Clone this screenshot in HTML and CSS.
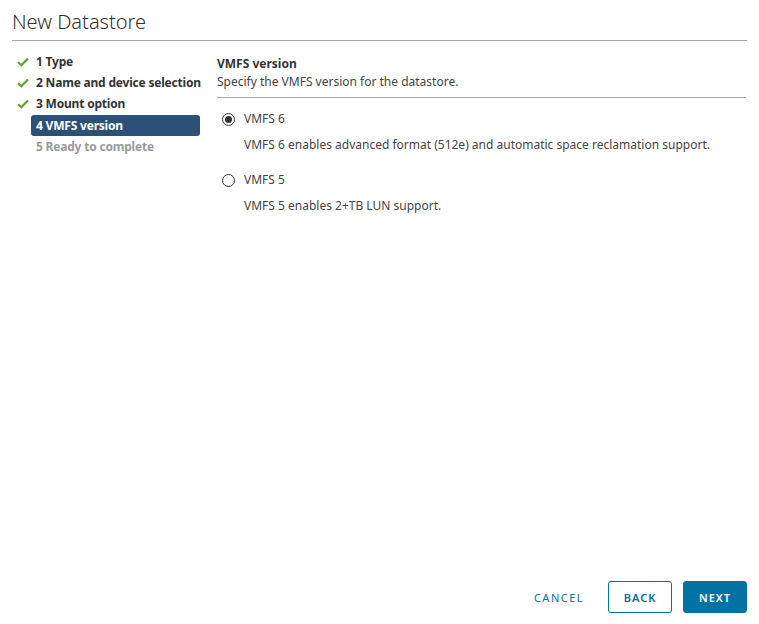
FILE: index.html
```html
<!DOCTYPE html>
<html lang="en">
<head>
    <meta charset="UTF-8">
    <title>New Datastore</title>
    <link rel="stylesheet" href="styles.css">
</head>
<body>
    <div class="wizard">
        <h1 class="wizard-title">New Datastore</h1>

        <div class="wizard-body">
            <ul class="steps">
                <li class="step done"><span class="check"><svg width="12" height="10" viewBox="0 0 12 10"><path d="M1 5.2 L4.3 8.3 L11 1.5" fill="none" stroke="#5fa02b" stroke-width="2.2"/></svg></span>1 Type</li>
                <li class="step done"><span class="check"><svg width="12" height="10" viewBox="0 0 12 10"><path d="M1 5.2 L4.3 8.3 L11 1.5" fill="none" stroke="#5fa02b" stroke-width="2.2"/></svg></span>2 Name and device selection</li>
                <li class="step done"><span class="check"><svg width="12" height="10" viewBox="0 0 12 10"><path d="M1 5.2 L4.3 8.3 L11 1.5" fill="none" stroke="#5fa02b" stroke-width="2.2"/></svg></span>3 Mount option</li>
                <li class="step active"><span class="check"></span><span class="label">4 VMFS version</span></li>
                <li class="step todo"><span class="check"></span>5 Ready to complete</li>
            </ul>

            <div class="content">
                <div class="section-head">
                    <div class="section-title">VMFS version</div>
                    <div class="section-desc">Specify the VMFS version for the datastore.</div>
                </div>

                <label class="option">
                    <span class="radio checked"></span>
                    <span>VMFS 6</span>
                </label>
                <p class="option-desc">VMFS 6 enables advanced format (512e) and automatic space reclamation support.</p>

                <label class="option">
                    <span class="radio"></span>
                    <span>VMFS 5</span>
                </label>
                <p class="option-desc">VMFS 5 enables 2+TB LUN support.</p>
            </div>
        </div>

        <div class="footer">
            <button class="btn btn-link">CANCEL</button>
            <button class="btn btn-outline">BACK</button>
            <button class="btn btn-primary">NEXT</button>
        </div>
    </div>
</body>
</html>
```

FILE: styles.css
```css
body {
    margin: 0;
    background: #fff;
    font-family: "Noto Sans", Arial, sans-serif;
    color: #333;
}
.wizard {
    width: 759px;
    height: 624px;
    display: flex;
    flex-direction: column;
    box-sizing: border-box;
    padding: 0 12px 0 12px;
}
.wizard-title {
    margin: 0;
    padding: 10px 0 6px 0;
    font-size: 20px;
    font-weight: 300;
    letter-spacing: 0;
    color: #313131;
    border-bottom: 1px solid #a6a6a6;
    line-height: 24px;
}
.wizard-body {
    flex: 1;
    display: flex;
}
.steps {
    list-style: none;
    margin: 0;
    padding: 10px 0 0 0;
    width: 205px;
}
.step {
    display: flex;
    align-items: center;
    height: 21px;
    font-size: 12px;
    font-weight: 700;
    letter-spacing: -0.2px;
    color: #333;
}
.check {
    width: 19px;
    padding-left: 5px;
    display: inline-flex;
    align-items: center;
}
.step.active .label {
    background: #2b5179;
    color: #fff;
    border-radius: 3px;
    width: 164px;
    padding: 2px 0 2px 5px;
    margin-left: -5px;
    margin-top: 1px;
}
.step.todo {
    color: #9a9a9a;
    padding-top: 1px;
}
.content {
    flex: 1;
    padding-top: 14px;
    padding-right: 1px;
}
.section-head {
    border-bottom: 1px solid #a6a6a6;
    padding-bottom: 6px;
}
.section-title {
    font-size: 12px;
    font-weight: 700;
    color: #333;
    line-height: 18px;
}
.section-desc {
    font-size: 12px;
    color: #444;
    line-height: 18px;
}
.option {
    display: flex;
    align-items: center;
    gap: 9px;
    margin: 12px 0 0 5px;
    font-size: 12px;
    color: #444;
    line-height: 18px;
}
.radio {
    width: 13px;
    height: 13px;
    border: 1px solid #333;
    border-radius: 50%;
    box-sizing: border-box;
    position: relative;
}
.radio.checked::after {
    content: "";
    position: absolute;
    left: 2px;
    top: 2px;
    width: 7px;
    height: 7px;
    border-radius: 50%;
    background: #333;
}
.option-desc {
    margin: 8px 0 17px 27px;
    font-size: 12px;
    color: #444;
    line-height: 18px;
}
.footer {
    display: flex;
    justify-content: flex-end;
    align-items: center;
    gap: 11px;
    padding-bottom: 11px;
}
.btn {
    font-family: inherit;
    font-size: 11px;
    font-weight: 600;
    letter-spacing: 1px;
    height: 32px;
    width: 64px;
    border-radius: 3px;
    cursor: pointer;
}
.btn-link {
    background: none;
    border: none;
    color: #0072a3;
    font-weight: 400;
    letter-spacing: 1.5px;
    margin-right: 6px;
}
.btn-outline {
    background: #fff;
    border: 1px solid #0072a3;
    color: #0072a3;
}
.btn-primary {
    background: #0072a3;
    border: 1px solid #0072a3;
    color: #fff;
}
```
